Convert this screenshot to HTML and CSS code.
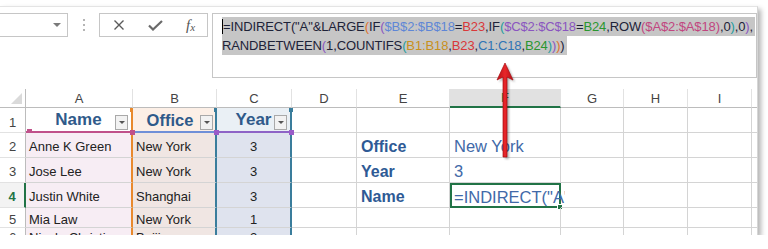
FILE: index.html
```html
<!DOCTYPE html>
<html>
<head>
<meta charset="utf-8">
<link rel="stylesheet" href="styles.css">
</head>
<body>
<div class="window">
  <div class="toolbar">
    <div class="namebox"><span class="nb-arrow"></span></div>
    <div class="sep"><i></i><i></i><i></i></div>
    <div class="btns">
      <svg class="ic ic-x" width="12" height="10" viewBox="0 0 12 10"><path d="M1.5 0.5 L10.5 9.5 M10.5 0.5 L1.5 9.5" /></svg>
      <svg class="ic ic-check" width="15" height="11" viewBox="0 0 15 11"><path d="M1 5.5 L5 9.5 L14 1" /></svg>
      <span class="fx">f<span class="fx-x">x</span></span>
    </div>
    <div class="formula">
      <div class="fline"><span class="sel"><span class="caret"></span>=INDIRECT("A"&amp;LARGE<span class="c-or">(</span>IF<span class="c-pu">(</span><span class="c-bl">$B$2:$B$18</span>=<span class="c-re">B23</span>,IF<span class="c-te">(</span><span class="c-pu">$C$2:$C$18</span>=<span class="c-gr">B24</span>,ROW<span class="c-pk">(</span><span class="c-pk">$A$2:$A$18</span><span class="c-pk">)</span>,0<span class="c-te">)</span>,0<span class="c-pu">)</span>,</span></div>
      <div class="fline"><span class="sel">RANDBETWEEN<span class="c-pu">(</span>1,COUNTIFS<span class="c-te">(</span><span class="c-go">B1:B18</span>,<span class="c-re">B23</span>,<span class="c-cb">C1:C18</span>,<span class="c-gr">B24</span><span class="c-te">)</span><span class="c-pu">)</span><span class="c-or">)</span>)</span></div>
    </div>
  </div>

  <div class="grid">
    <!-- header row -->
    <div class="ch corner"><span class="tri"></span></div>
    <div class="ch">A</div>
    <div class="ch">B</div>
    <div class="ch">C</div>
    <div class="ch">D</div>
    <div class="ch">E</div>
    <div class="ch ch-sel">F</div>
    <div class="ch">G</div>
    <div class="ch">H</div>
    <div class="ch">I</div>
    <div class="ch ch-end"></div>

    <!-- row 1 -->
    <div class="rh r1">1</div>
    <div class="c r1 hd hd-a">Name<span class="flt"></span><span class="hdl h-l-pk"></span><span class="hdl h-br-pk"></span><span class="hdl h-tr-or"></span></div>
    <div class="c r1 hd hd-b">Office<span class="flt"></span><span class="hdl h-br-pu"></span><span class="hdl h-tr-te"></span></div>
    <div class="c r1 hd hd-c">Year<span class="flt"></span><span class="hdl h-br-pu"></span><span class="hdl h-tr-te"></span></div>
    <div class="c r1"></div>
    <div class="c r1"></div>
    <div class="c r1"></div>
    <div class="c r1"></div>
    <div class="c r1"></div>
    <div class="c r1"></div>
    <div class="c r1 end"></div>

    <!-- row 2 -->
    <div class="rh rr">2</div>
    <div class="c rr ca">Anne K Green</div>
    <div class="c rr cb">New York</div>
    <div class="c rr cc">3</div>
    <div class="c rr"></div>
    <div class="c rr lbl">Office</div>
    <div class="c rr val">New York</div>
    <div class="c rr"></div>
    <div class="c rr"></div>
    <div class="c rr"></div>
    <div class="c rr end"></div>

    <!-- row 3 -->
    <div class="rh rr">3</div>
    <div class="c rr ca">Jose Lee</div>
    <div class="c rr cb">New York</div>
    <div class="c rr cc">3</div>
    <div class="c rr"></div>
    <div class="c rr lbl">Year</div>
    <div class="c rr val">3</div>
    <div class="c rr"></div>
    <div class="c rr"></div>
    <div class="c rr"></div>
    <div class="c rr end"></div>

    <!-- row 4 -->
    <div class="rh rr rh-sel">4</div>
    <div class="c rr ca">Justin White</div>
    <div class="c rr cb">Shanghai</div>
    <div class="c rr cc">3</div>
    <div class="c rr"></div>
    <div class="c rr lbl">Name</div>
    <div class="c rr val active">=INDIRECT("A"<span class="fill"></span></div>
    <div class="c rr"></div>
    <div class="c rr"></div>
    <div class="c rr"></div>
    <div class="c rr end"></div>

    <!-- row 5 -->
    <div class="rh r5">5</div>
    <div class="c r5 ca">Mia Law</div>
    <div class="c r5 cb">New York</div>
    <div class="c r5 cc">1</div>
    <div class="c r5"></div>
    <div class="c r5"></div>
    <div class="c r5"></div>
    <div class="c r5"></div>
    <div class="c r5"></div>
    <div class="c r5"></div>
    <div class="c r5 end"></div>

    <!-- row 6 -->
    <div class="rh r6">6</div>
    <div class="c r6 ca">Nicole Christian</div>
    <div class="c r6 cb">Beijing</div>
    <div class="c r6 cc">2</div>
    <div class="c r6"></div>
    <div class="c r6"></div>
    <div class="c r6"></div>
    <div class="c r6"></div>
    <div class="c r6"></div>
    <div class="c r6"></div>
    <div class="c r6 end"></div>
  </div>

  <svg class="arrow" width="30" height="104" viewBox="0 0 30 104">
    <defs>
      <linearGradient id="rg" x1="0" y1="0" x2="1" y2="0">
        <stop offset="0" stop-color="#b80f14"/>
        <stop offset="0.5" stop-color="#e8262a"/>
        <stop offset="1" stop-color="#b80f14"/>
      </linearGradient>
      <filter id="blur" x="-50%" y="-10%" width="200%" height="120%"><feGaussianBlur stdDeviation="1"/></filter>
    </defs>
    <path d="M17 7 L25 24 L19 21 L19 101 L15 101 L15 21 L9 24 Z" fill="rgba(0,0,0,0.3)" filter="url(#blur)"/>
    <path d="M15 5 L23 22 L17 19 L17 99 L13 99 L13 19 L7 22 Z" fill="url(#rg)" stroke="#a80d12" stroke-width="0.7" stroke-linejoin="round"/>
  </svg>
</div>
</body>
</html>
```

FILE: styles.css
```css
* { box-sizing: border-box; }

body {
  margin: 0;
  background: #ffffff;
  font-family: "Liberation Sans", Arial, sans-serif;
}

.window {
  position: relative;
  width: 758px;
  height: 229px;
  margin-top: 6px;
  background: #ffffff;
  border-top: 1px solid #e4e4e4;
  border-right: 1px solid #d6d6d6;
  box-shadow: 3px 3px 5px rgba(0, 0, 0, 0.3);
  overflow: hidden;
}

/* ---------- formula toolbar ---------- */
.toolbar {
  height: 82px;
  display: flex;
  align-items: flex-start;
  padding-top: 6px;
}

.namebox {
  width: 68px;
  height: 24px;
  border: 1px solid #c6c6c6;
  border-left: none;
  display: flex;
  align-items: center;
  justify-content: flex-end;
  padding-right: 6px;
}

.nb-arrow {
  width: 0;
  height: 0;
  border-left: 4px solid transparent;
  border-right: 4px solid transparent;
  border-top: 4px solid #7a7a7a;
}

.sep {
  width: 31px;
  height: 24px;
  display: flex;
  flex-direction: column;
  align-items: center;
  justify-content: center;
  gap: 3px;
}

.sep i {
  display: block;
  width: 2px;
  height: 2px;
  background: #b5b5b5;
}

.btns {
  width: 109px;
  height: 24px;
  border: 1px solid #c6c6c6;
  display: flex;
  align-items: center;
  padding-left: 13px;
}

.ic path {
  fill: none;
  stroke: #5a5a5a;
}

.ic-x path { stroke-width: 1.4; }
.ic-check { margin-left: 23px; }
.ic-check path { stroke-width: 2.2; stroke: #6a6a6a; }

.fx {
  margin-left: 23px;
  font-family: "Liberation Serif", "Times New Roman", serif;
  font-style: italic;
  font-size: 15px;
  color: #555555;
  line-height: 1;
}

.fx-x {
  font-size: 11px;
  position: relative;
  top: 1px;
}

.formula {
  margin-left: 4px;
  width: 545px;
  height: 65px;
  border: 1px solid #c6c6c6;
  padding: 3px 0 0 9px;
  font-size: 13px;
  color: #1d2238;
}

.fline {
  height: 19px;
  line-height: 19px;
  white-space: nowrap;
}

.sel {
  display: inline-block;
  background: #c6c6c6;
  padding-right: 2px;
  letter-spacing: -0.12px;
}

.caret {
  display: inline-block;
  width: 1px;
  height: 15px;
  background: #000;
  vertical-align: -3px;
  margin-right: 0;
}

.c-or { color: #e0702a; }
.c-pu { color: #8a55c0; }
.c-bl { color: #5e86d6; }
.c-re { color: #d9383a; }
.c-te { color: #1c9c9c; }
.c-gr { color: #2a962f; }
.c-pk { color: #c1457f; }
.c-go { color: #c8901c; }
.c-cb { color: #2f74b4; }

/* ---------- grid ---------- */
.grid {
  display: grid;
  grid-template-columns: 26px 107px 84px 75px 65px 93px 111px 63px 64px 64px 6px;
  grid-template-rows: 19px 25px 25px 25px 25px 20px 25px;
  font-size: 13px;
  line-height: 15px;
  color: #222222;
}

.ch {
  display: flex;
  align-items: center;
  justify-content: center;
  color: #444444;
  font-size: 13px;
  border-right: 1px solid #e2e2e2;
  border-bottom: 1px solid #bcbcbc;
}

.ch-sel {
  background: #e1e1e1;
  color: #217346;
  border-bottom: 2px solid #217346;
}

.ch-end { border-right: none; }

.corner {
  position: relative;
  border-right: 1px solid #bcbcbc;
}

.tri {
  position: absolute;
  right: 3px;
  bottom: 3px;
  width: 0;
  height: 0;
  border-left: 11px solid transparent;
  border-bottom: 11px solid #dadada;
}

.rh {
  display: flex;
  justify-content: center;
  align-items: flex-start;
  padding-top: 6px;
  color: #444444;
  border-right: 1px solid #bcbcbc;
  border-bottom: 1px solid #e2e2e2;
}

.rh.r1 { padding-top: 7px; }
.rh.r5 { padding-top: 4px; }
.rh.r6 { padding-top: 2px; }

.rh-sel {
  color: #217346;
  font-weight: bold;
  border-right: 2px solid #217346;
  background: #f3f3f3;
}

.c {
  position: relative;
  display: flex;
  align-items: flex-start;
  padding: 6px 3px 0 3px;
  white-space: nowrap;
  overflow: visible;
  border-right: 1px solid #d4d4d4;
  border-bottom: 1px solid #d4d4d4;
}

.c.r5 { padding-top: 4px; }
.c.r6 { padding-top: 2px; }
.c.end { border-right: none; }

/* table columns */
.ca {
  background: #f7edf4;
  border-right: 2px solid #e8892c;
}

.cb {
  background: #f0e6e3;
  border-right: 2px solid #3a7d9c;
}

.cc {
  background: #dfe3ee;
  border-right: 2px solid #3a7d9c;
  justify-content: center;
}

.hd {
  align-items: center;
  justify-content: center;
  padding: 0;
  font-size: 17px;
  font-weight: bold;
  color: #2f5a8a;
  line-height: 20px;
}

.hd-a { background: #ffffff; border-right: 2px solid #e8892c; border-bottom: 2px solid #c0508a; }
.hd-b { background: #fcefe6; border-right: 2px solid #3a7d9c; border-bottom: 2px solid #6f8fd8; padding-right: 8px; font-size: 16.5px; }
.hd-c { background: #eaf0f5; border-right: 2px solid #3a7d9c; border-bottom: 2px solid #8e63c6; }

.flt {
  position: absolute;
  right: 3px;
  top: 7px;
  width: 13px;
  height: 15px;
  background: #f2f2f2;
  border: 1px solid #a9a9a9;
  display: flex;
  align-items: center;
  justify-content: center;
}

.flt::after {
  content: "";
  width: 0;
  height: 0;
  border-left: 3px solid transparent;
  border-right: 3px solid transparent;
  border-top: 3px solid #555555;
}

.hd-b .flt { right: 2px; }

.hdl {
  position: absolute;
  width: 5px;
  height: 5px;
}

.h-l-pk { left: 1px; bottom: -3px; background: #c0508a; }
.h-br-pk { right: -4px; bottom: -4px; background: #c0508a; z-index: 2; }
.h-br-pu { right: -4px; bottom: -4px; background: #9a5cc8; z-index: 2; }
.h-tr-or { right: -3px; top: 0; width: 4px; height: 4px; background: #e8892c; }
.h-tr-te { right: -3px; top: 0; width: 4px; height: 4px; background: #3a7d9c; }

.lbl {
  font-size: 16px;
  font-weight: bold;
  color: #2e5a95;
  padding-top: 5px;
  padding-left: 4px;
  line-height: 18px;
}

.val {
  font-size: 16.5px;
  color: #4169a8;
  padding-top: 4px;
  padding-left: 4px;
  line-height: 19px;
}

.active {
  border: 2px solid #217346;
  padding-top: 3px;
  padding-left: 2px;
  clip-path: inset(0 -4px -4px 0);
}

.fill {
  position: absolute;
  right: -4px;
  bottom: -4px;
  width: 6px;
  height: 6px;
  background: #217346;
  border: 1px solid #ffffff;
  z-index: 3;
}

/* ---------- callout arrow ---------- */
.arrow {
  position: absolute;
  left: 490px;
  top: 51px;
}
```
